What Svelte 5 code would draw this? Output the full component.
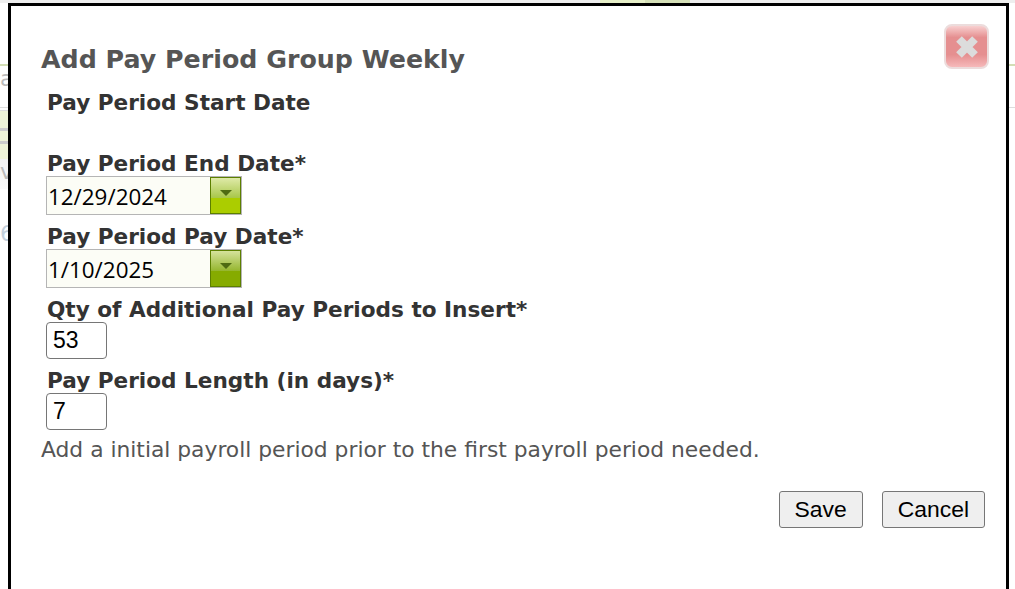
<script>
	let endDate = $state('12/29/2024');
	let payDate = $state('1/10/2025');
	let qty = $state('53');
	let length = $state('7');
</script>

<div class="page">
	<div class="topbar">
		<span class="tab"></span>
		<span class="tab dark"></span>
	</div>
	<div class="subnav">
		<span class="ghost">a</span>
	</div>
	<div class="band"><span class="ghost-bar"></span></div>
	<div class="fade"><span class="ghost">v</span></div>
	<div class="row"><span class="ghost blue">6</span></div>
</div>

<div class="modal">
	<button class="close" aria-label="Close">
		<svg viewBox="0 0 30 30" width="30" height="30">
			<path d="M7 7 L23 23 M23 7 L7 23" stroke="#dcdcdc" stroke-width="8" />
		</svg>
	</button>

	<h2>Add Pay Period Group Weekly</h2>

	<form class="fields" onsubmit={(e) => e.preventDefault()}>
		<div class="field start">
			<label for="end">Pay Period Start Date</label>
		</div>

		<div class="field">
			<label for="end">Pay Period End Date*</label>
			<div class="datepicker">
				<input id="end" bind:value={endDate} />
				<span class="arrow"><i></i></span>
			</div>
		</div>

		<div class="field">
			<label for="pay">Pay Period Pay Date*</label>
			<div class="datepicker">
				<input id="pay" bind:value={payDate} />
				<span class="arrow on"><i></i></span>
			</div>
		</div>

		<div class="field">
			<label for="qty">Qty of Additional Pay Periods to Insert*</label>
			<input id="qty" class="num" bind:value={qty} />
		</div>

		<div class="field">
			<label for="len">Pay Period Length (in days)*</label>
			<input id="len" class="num" bind:value={length} />
		</div>
	</form>

	<p class="note">Add a initial payroll period prior to the first payroll period needed.</p>

	<div class="actions">
		<button type="button">Save</button>
		<button type="button">Cancel</button>
	</div>
</div>

<style>
	:global(body) {
		margin: 0;
		background: #fff;
		overflow: hidden;
	}

	.page {
		height: 589px;
		overflow: hidden;
	}

	.topbar {
		height: 3px;
		background: #eee;
		display: flex;
		padding-left: 600px;
	}

	.tab {
		width: 45px;
		background: #e6efc8;
	}

	.tab.dark {
		background: #d5e0b8;
	}

	.subnav {
		margin-top: 61px;
		height: 44px;
		box-sizing: border-box;
		border-top: 2px solid #d3deb5;
		border-bottom: 1px solid #ddd;
		line-height: 28px;
	}

	.ghost {
		font: 22px "DejaVu Sans", sans-serif;
		color: #bbb;
	}

	.ghost.blue {
		color: #c3d0dc;
	}

	.band {
		width: 60px;
		height: 49px;
		margin-top: 2px;
		padding-top: 17px;
		box-sizing: border-box;
		background: #eef3d8;
		border-top: 1px solid #ddd;
	}

	.ghost-bar {
		display: block;
		width: 8px;
		height: 16px;
		border-top: 3px solid #ccc;
		border-bottom: 3px solid #ccc;
		box-sizing: border-box;
	}

	.fade {
		width: 60px;
		height: 30px;
		background: linear-gradient(#f2f2f2, #fafafa);
	}

	.row {
		margin-top: 32px;
	}

	.modal {
		position: absolute;
		left: 8px;
		top: 3px;
		width: 1001px;
		height: 586px;
		box-sizing: border-box;
		border: 3px solid #000;
		border-bottom: 0;
		background: #fff;
		padding: 36px 21px 0 30px;
		font-family: "DejaVu Sans", Verdana, sans-serif;
		color: #333;
	}

	.close {
		position: absolute;
		top: 18px;
		right: 17px;
		width: 45px;
		height: 45px;
		padding: 0;
		display: flex;
		align-items: center;
		justify-content: center;
		border: 2px solid #ecdcdc;
		border-radius: 8px;
		background: linear-gradient(#f8d0d0 0, #e58f90 28%, #e58f90 70%, #f6b9ba 100%);
	}

	.close svg {
		filter: blur(0.6px);
	}

	h2 {
		margin: 0;
		font-size: 25.3px;
		line-height: 36px;
		font-weight: bold;
		color: #555;
	}

	.fields {
		margin-top: 3px;
		padding-left: 5px;
	}

	.field {
		display: flex;
		flex-direction: column;
		align-items: flex-start;
	}

	.field.start {
		height: 61px;
	}

	label {
		margin-left: 1px;
		padding: 11px 0 1px;
		font-size: 21.6px;
		line-height: 22px;
		font-weight: bold;
		color: #333;
	}

	.datepicker {
		display: flex;
		width: 196px;
		height: 39px;
		box-sizing: border-box;
		border: 1px solid #b5b5b5;
		background: #fcfdf6;
	}

	.datepicker input {
		flex: 1;
		min-width: 0;
		border: 0;
		outline: 0;
		background: transparent;
		padding: 1px 1px 0;
		font: 22.4px "Open Sans", sans-serif;
		color: #000;
	}

	.arrow {
		width: 31px;
		box-sizing: border-box;
		border: 1px solid #5c7f00;
		display: flex;
		align-items: center;
		justify-content: center;
		background: linear-gradient(#dfeaa8 0, #a7c648 58%, #abcd00 58%, #abcd00 100%);
	}

	.arrow.on {
		background: linear-gradient(#d5e29c 0, #94b52c 58%, #86ab00 58%, #86ab00 100%);
	}

	.arrow i {
		width: 0;
		height: 0;
		margin-top: -6px;
		border-left: 6px solid transparent;
		border-right: 6px solid transparent;
		border-top: 6px solid #4f6b12;
	}

	.num {
		width: 61px;
		height: 37px;
		box-sizing: border-box;
		border: 1px solid #767676;
		border-radius: 4px;
		padding: 0 6px;
		font: 23px "Liberation Sans", Arial, sans-serif;
		color: #000;
		outline: 0;
	}

	.note {
		margin: 3px 0 0;
		font-size: 21.8px;
		line-height: 34px;
		color: #555;
	}

	.actions {
		display: flex;
		justify-content: flex-end;
		gap: 19px;
		margin-top: 24px;
	}

	.actions button {
		height: 37px;
		padding: 0 15px;
		border: 1px solid #767676;
		border-radius: 3px;
		background: #efefef;
		font: 22.9px "Liberation Sans", Arial, sans-serif;
		color: #000;
	}
</style>
